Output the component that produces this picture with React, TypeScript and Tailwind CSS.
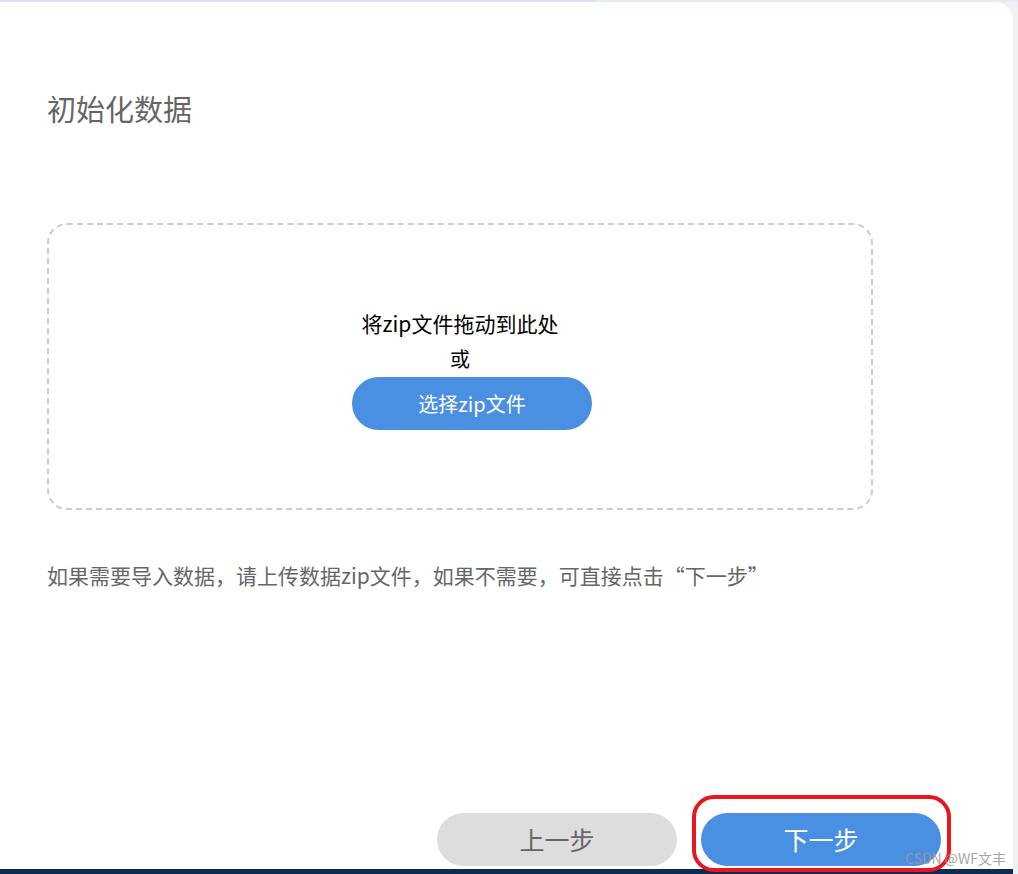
import React from "react";

const cjk = { fontFamily: '"Microsoft YaHei", "Noto Sans CJK SC", "Noto Sans", sans-serif' };

export default function App() {
  return (
    <div
      className="relative w-[1018px] h-[874px] overflow-hidden bg-[#eef1f6] flex flex-col"
      style={cjk}
    >
      {/* top strip of the page behind the card */}
      <div className="flex h-[2px] shrink-0">
        <div className="w-[598px] bg-[#d6e5f6]" />
        <div className="flex-1 bg-[#e6ebf5]" />
      </div>

      <div className="flex flex-1 min-h-0">
        {/* card */}
        <div className="flex-1 bg-white rounded-tr-[18px] flex flex-col pl-[47px]">
          <h1 className="mt-[88px] text-[29px] leading-[36px] text-[#666666] font-normal">
            初始化数据
          </h1>

          {/* drop zone */}
          <div className="mt-[97px] w-[826px] h-[287px] rounded-[20px] border-2 border-dashed border-[#cccccc] flex flex-col items-center pt-[80px]">
            <p className="text-[21px] leading-[36px] text-black">将zip文件拖动到此处</p>
            <p className="text-[20px] leading-[36px] text-black">或</p>
            <button className="ml-[24px] w-[240px] h-[53px] rounded-full bg-[#4a90e2] text-white text-[20px]">
              选择zip文件
            </button>
          </div>

          <p className="mt-[50px] text-[21px] leading-[30px] text-[#666666]">
            如果需要导入数据，请上传数据zip文件，如果不需要，可直接点击“下一步”
          </p>

          <div className="flex-1" />

          {/* step navigation */}
          <div className="flex justify-end gap-[24px] pr-[72px] pb-[3px]">
            <button className="w-[240px] h-[53px] rounded-full bg-[#dddddd] text-[#666666] text-[25px]">
              上一步
            </button>
            <button className="w-[240px] h-[53px] rounded-full bg-[#4a90e2] text-white text-[25px]">
              下一步
            </button>
          </div>
        </div>
        <div className="w-[5px] bg-[#eef0f4]" />
      </div>

      {/* bottom bar */}
      <div className="h-[5px] shrink-0 bg-[#0c2b55] mr-[5px]" />

      {/* red highlight around next button */}
      <div className="absolute left-[692px] top-[795px] w-[259px] h-[77px] rounded-[22px] border-[4px] border-[#e8161e]" />

      {/* watermark */}
      <div className="absolute left-[905px] top-[850px] text-[14px] leading-[16px] text-[#9a9a9a]/90">
        CSDN @WF文丰
      </div>
    </div>
  );
}
